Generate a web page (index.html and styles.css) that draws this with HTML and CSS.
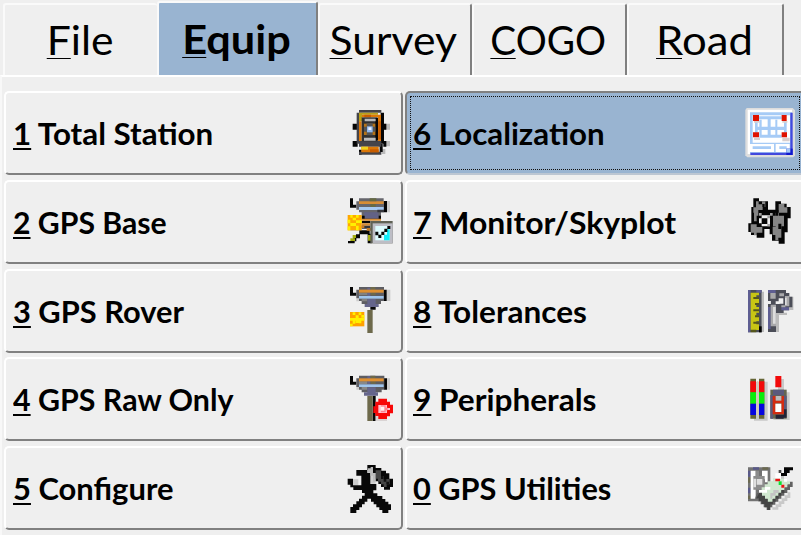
FILE: index.html
```
<!DOCTYPE html>
<html lang="en">
<head>
<meta charset="utf-8">
<title>Equip</title>
<link rel="stylesheet" href="styles.css">
</head>
<body>
<nav class="tabs">
<a class="tab file"><span><u>F</u>ile</span></a>
<a class="tab active"><span><u>E</u>quip</span></a>
<a class="tab survey"><span><u>S</u>urvey</span></a>
<a class="tab cogo"><span><u>C</u>OGO</span></a>
<a class="tab road"><span><u>R</u>oad</span></a>
</nav>
<main class="panel">
<button class="item"><span class="label l1"><u>1</u> Total Station</span>
<svg class="icon" viewBox="15 24 150 150"><path fill="#bbb" d="M132 71h18v18h-18zM132 123h18v16h-18zM126 147h10v15h-10z"/><path fill="#050505" d="M38 71h15v18H38zM38 123h15v17H38zM122 38h10v93h-10zM130 71h9v18h-9zM130 123h9v17h-9zM57 149h8v15h-8zM119 132h9v24h-9z"/><path fill="#44444a" d="M50 38h8v93h-8zM57 30h67v8H57zM57 123h67v17H57zM57 155h67v9H57z"/><path fill="#b8a018" d="M57 38h9v26h-9zM66 38h48v6H66z"/><path fill="#dc7808" d="M66 44h48v8H66zM57 64h8v59h-8zM114 44h9v79h-9zM64 140h52v17H64z"/><path fill="#c75c00" d="M73 44h20v8H73zM115 64h8v54h-8zM90 148h26v9H90z"/><path fill="#303030" d="M65 52h48v72H65z"/><path fill="#060606" d="M106 54h8v67h-8z"/><path fill="#bbb" d="M74 56h33v8H74zM72 113h35v9H72z"/><path fill="#b57316" d="M72 71h34v34H72z"/><path fill="#555" d="M80 70h18v36H80zM72 80h34v15H72z"/><path fill="#91b9ee" d="M81 79h17v18H81z"/><path fill="#f2f6ff" d="M85 82h9v8h-9z"/><path fill="#efd11c" d="M64 140h20v9H64z"/></svg></button>
<button class="item selected"><span class="label r1"><u>6</u> Localization</span>
<svg class="icon" viewBox="30 69 150 150"><path fill="#ddd" d="M35 69h138l7 7v136l-6 5H37l-6-6V75z"/><path fill="#fff" d="M38 74h133v133H38z"/><path fill="#a6cbf6" d="M45 82h126v123H45z"/><path fill="#fff" d="M53 91h112v82H53zM45 177h72v24H45zM122 177h42v24h-42z"/><path fill="#a6cbf6" d="M72 94h68v9H72zM60 108h8v35h-8zM68 125h86v10H68zM98 98h9v56h-9zM147 108h8v35h-8zM73 149h67v9H73zM73 104h7v47h-7zM121 104h6v47h-6zM53 184h55v8H53zM133 184h22v8h-22z"/><path fill="#d8cfcf" d="M57 108h17v5H57zM142 108h15v5h-15zM57 158h18v7H57zM142 158h22v11h-22z"/><path fill="#df1200" d="M54 90h18v18H54zM140 90h15v18h-15zM54 142h18v15H54zM140 142h16v15h-16z"/><path fill="#4248dd" d="M166 83h7v127h-7zM46 203h125v7H46z"/><path fill="#1018ce" d="M154 191h19v19h-19z"/><path fill="#a6cbf6" d="M154 191h12v12h-12z"/></svg></button>
<button class="item"><span class="label l2"><u>2</u> GPS Base</span>
<svg class="icon" viewBox="15 36 150 150"><path fill="#ccc" d="M141 48h9v34h-9zM31 115h34v23H31z"/><path fill="#060606" d="M30 40h9v19h10v9H30zM132 48h9v34h-9zM65 91h58v13H65zM65 107h26v8H65zM58 136h31v12H58zM48 148h12v12H48zM40 158h9v11h-9zM83 146h12v29H83zM24 168h20v7H24z"/><path fill="#66666c" d="M57 40h74v9H57zM49 49h83v25H49zM57 74h75v8H57zM65 82h58v9H65z"/><path fill="#626286" d="M72 82h43v9H72zM74 91h42v10H74z"/><path fill="#d68d36" d="M57 49h74v8H57zM65 101h58v6H65zM65 115h26v7H65z"/><path fill="#a5c9f2" d="M57 66h74v9H57z"/><path fill="#666a43" d="M89 40h20v9H89zM91 57h16v9H91z"/><path fill="#36363c" d="M65 122h26v9H65zM112 74h20v8h-20z"/><path fill="#ffa800" d="M23 90h42v46H23z"/><path fill="#fff000" d="M31 90h7v8h-7zM48 90h8v8h-8zM23 104h8v11h-8zM38 98h10v8H38zM48 106h17v8H48zM31 114h17v9H31zM48 122h8v14h-8zM23 124h8v12h-8z"/><path fill="#c47b24" d="M65 121h8v8h-8zM80 129h16v8H80z"/><path fill="#a5ad12" d="M38 150h10v9H38zM31 160h14v8H31zM84 150h9v17h-9z"/><path fill="#606256" d="M91 108h67v67H91z"/><path fill="#bdbdc5" d="M98 115h60v60H98z"/><path fill="#ddfcff" d="M106 123h43v43h-43z"/><path fill="#10edfa" d="M132 149h17v17h-17zM141 133h8v16h-8z"/><path fill="#060606" d="M106 140h9v9h9v-9h9v-9h9v-8h9v9h-9v9h-9v9h-9v9h-9v-8h-9z"/></svg></button>
<button class="item"><span class="label r2"><u>7</u> Monitor/Skyplot</span>
<svg class="icon" viewBox="30 36 150 150"><path fill="#050505" d="M55 40h17v9h27v25h22V49h17v7h17v10h12v34h-9v42h-9v34h-18v-9h-20v-19h-7v-16H88v26H65v-8H48v-9h-8v-26h9V66h6z"/><path fill="#858585" d="M63 49h8v17h18V57h-8v-8h10v17h-8v9H64v8h-9V67h8zM65 58h17v17H65zM57 75h13v34H57zM47 118h18v8h17v17H65v8H57v-8H47zM131 57h17v10h9v16h-25v9h15v32h-8v9h-17v-9h-8V92h8v-9h9zM113 125h26v33h-9v8h-9v-16h-8z"/><path fill="#ededed" d="M72 100h8v-9h25v33H80v-9h-8z"/><path fill="#a0a0a0" d="M72 84h8v8h-8zM105 84h8v8h-8zM97 91h8v9h-8zM97 117h8v7h-8z"/><path fill="#050505" d="M80 100h17v17H80zM65 92h7v25h-7zM122 75h8v17h-8zM130 116h9v16h-9z"/></svg></button>
<button class="item"><span class="label l3"><u>3</u> GPS Rover</span>
<svg class="icon" viewBox="15 33 150 150"><path fill="#ccc" d="M139 44h12v34h-12zM49 70h8v9h-8z"/><path fill="#070707" d="M30 36h9v17h10v9H30zM132 44h8v34h-8zM91 95h16v9H91z"/><path fill="#5d5d62" d="M49 44h8v-8h75v42h-9v9H65v-9h-8v-8h-8z"/><path fill="#818181" d="M57 53h26v8H57zM65 72h17v7H65z"/><path fill="#6d694b" d="M91 36h15v9H91zM91 53h16v8H91zM82 105h16v69H82z"/><path fill="#65658b" d="M74 87h42v9H74zM82 72h25v24H82zM82 38h9v25h-9z"/><path fill="#df9031" d="M57 44h74v9H57z"/><path fill="#9fc5ed" d="M57 63h74v8H57z"/><path fill="#ffa000" d="M30 111h43v43H30z"/><path fill="#fff000" d="M38 112h8v8h-8zM56 112h8v8h-8zM30 129h18v8H30zM56 129h17v8H56zM47 121h9v23h-9zM38 137h8v9h-8zM56 137h8v8h-8zM30 146h8v8h-8zM64 120h9v8h-9z"/></svg></button>
<button class="item"><span class="label r3"><u>8</u> Tolerances</span>
<svg class="icon" viewBox="30 33 150 150"><path fill="#bbb" d="M80 50h7v121h-7zM122 106h10v65h-10zM165 65h10v40h-10zM132 113h24v7h-24z"/><path fill="#4c4e58" d="M39 45h41v127H39zM99 45h54v9h10v11h9v32h-9v9h-17v8h-23v57H99V87h8v-9h-8z"/><path fill="#5e5e92" d="M39 45h8v127h-8zM64 45h16v8H64zM99 45h23v9H99zM99 96h8v66h-8zM139 97h23v9h-23z"/><path fill="#c8c514" d="M47 53h25v8h-8v9h8v17h-8v9h8v17h-8v9h8v17h-8v9h8v17H47z"/><path fill="#55571b" d="M55 66h17v6H55zM60 84h12v6H60zM55 103h17v6H55zM60 121h12v6H60zM55 140h17v6H55zM47 164h17v8H47z"/><path fill="#a9a9ab" d="M106 54h16v17h-16zM107 89h16v65h-16zM133 55h14v9h-14zM150 63h13v31h-13zM139 91h12v6h-12z"/><path fill="#efefef" d="M131 70h14v16h-14zM99 78h8v9h-8zM122 79h12v8h-12z"/><path fill="#ddd" d="M114 96h8v50h-8zM150 68h5v22h-5z"/><path fill="#030303" d="M72 154h8v18h-8z"/></svg></button>
<button class="item"><span class="label l4"><u>4</u> GPS Raw Only</span>
<svg class="icon" viewBox="15 27 150 150"><path fill="#ccc" d="M141 40h9v34h-9zM49 65h8v9h-8z"/><path fill="#070707" d="M30 33h9v17h10v9H30zM132 40h9v34h-9zM98 92h9v76h-9z"/><path fill="#5d5d62" d="M49 40h8v-8h76v42h-8v8H65v-8h-8v-8h-8z"/><path fill="#888" d="M57 49h25v8H57zM65 66h17v8H65z"/><path fill="#6d694b" d="M91 32h15v9H91zM91 49h16v8H91zM82 92h16v76H82z"/><path fill="#65658b" d="M72 82h42v10H72zM82 67h25v24H82zM82 34h9v24h-9z"/><path fill="#df9031" d="M57 40h74v9H57z"/><path fill="#9fc5ed" d="M57 58h74v8H57z"/><path fill="#d9d4d4" d="M107 152h34v16h-34z"/><path fill="#f70808" d="M115 101h26v9h9v9h9v26h-9v9h-9v8h-26v-9h-9v-9h-6v-20h6v-14h9z"/><path fill="#ffc2cc" d="M115 120h26v9h9v6h-9v9h-26z"/><path fill="#ff8490" d="M123 121h14v7h6v8h-6v6h-14z"/><path fill="#fff3f3" d="M122 125h11v12h-11z"/></svg></button>
<button class="item"><span class="label r4"><u>9</u> Peripherals</span>
<svg class="icon" viewBox="30 27 150 150"><path fill="#c9c9c9" d="M57 50h41v117H57zM129 42h18v33h-18zM147 82h17v83h-49v-10h32z"/><path fill="#656535" d="M46 41h17v120H46zM72 41h16v120H72z"/><path fill="#f20a0a" d="M46 49h17v33H46zM72 49h16v33H72zM121 33h18v34h-18z"/><path fill="#0aed0a" d="M46 82h17v34H46zM72 82h16v34H72z"/><path fill="#0505df" d="M46 116h17v34H46zM72 116h16v34H72z"/><path fill="#d9c8aa" d="M66 49h4v101h-4z"/><path fill="#64654f" d="M106 74h49v87h-49z"/><path fill="#5a597c" d="M106 90h8v71h-8zM114 74h33v17h-33zM147 92h8v42h-8z"/><path fill="#222236" d="M122 149h24v12h-24zM146 133h9v25h-9z"/><path fill="#d32b11" d="M113 93h9v55h-9zM139 93h8v55h-8zM122 106h17v9h-17zM122 141h17v7h-17z"/><path fill="#bcbcbc" d="M122 93h17v14h-17z"/><path fill="#fff" d="M121 116h18v25h-18z"/></svg></button>
<button class="item"><span class="label l5"><u>5</u> Configure</span>
<svg class="icon" viewBox="15 39 150 150"><path fill="#ccc" d="M39 88h16v18H39zM91 51h16v50H91z"/><path fill="#080808" d="M49 60h33v9h9v33h18v19h-9v9h12v8h15v9h9v8h9v8h8v17h-8v9h-18v-9h-9v-8h-9v-9h-8v-8h-8v-9H82v9h-8v8h-8v9h-8v8h-9v9H31v-18h8v-8h10v-9h8v-8h9v-9h8v-8h-8v-9H40v-8h-9v-8h-8V86h16v20h25V77H49zM82 45h25v9h17v8h14v8h10v16h11v25h-9v8h-18v-8h-9v-9h-8v-8h-8V69h-8v-9h-17z"/><path fill="#464646" d="M107 61h16v17h9v9h17v16h-9v8h-9v-8h-8v-8h-9v-9h-7z"/><path fill="#bbb" d="M83 55h9v-4h7v18h7v26h-7V77h-8v-9h-8z"/><path fill="#111" d="M123 78h8v9h8v8h8v8h-8v-8h-8v-8h-8z"/></svg></button>
<button class="item"><span class="label r5"><u>0</u> GPS Utilities</span>
<svg class="icon" viewBox="30 39 150 150"><path fill="#c9c9c9" d="M48 146h25v-9h8v9h8v9h9v9h8v8h16v-9h9v-9h9v-9h9v-9h9v-9h8v17h-9v9h-9v9h-9v9h-9v8h-18v-8h-9v-9h-9v-9h-9v-9H48z"/><path fill="#737373" d="M39 52h67v70H73v32H39z"/><path fill="#595989" d="M54 52h18v7H54zM39 62h8v18h-8zM39 113h8v17h-8z"/><path fill="#6b6950" d="M82 52h18v7H82zM39 82h8v16h-8zM39 137h8v10h-8z"/><path fill="#fff" d="M47 62h15v84H47zM81 62h17v35h-8v-9h-9z"/><path fill="#8c8c8c" d="M55 78h34v41H55zM62 62h10v17H62z"/><path fill="#e0e0e0" d="M55 86h8v26h-8zM65 87h17v17H65z"/><path fill="#626262" d="M66 129h65l34-34h8v16h-8v9h-8v9h-9v8h-9v9h-9v9h-9v9h-9v8h-9v8h-8v-8h-9v-9h-9v-9h-8v-8h-9z"/><path fill="#d1e8d0" d="M80 129v-17h9v-9h9v-9h16v-9h9v-9h16v9h9v9h17v9h-8v9h-9v9h-9v9h-9v9h-9v8h-9v9H98v-9H80z"/><path fill="#fff" d="M72 120h18v-9h16v8H96v9H72zM121 70h17v16h-17zM147 87h9v8h-9z"/><path fill="#c4c4c4" d="M106 129h9v-9h16v9h-9v8h-10v9h-6zM138 78h9v8h-9z"/><path fill="#444" d="M73 128h8v9h9v9h8v9h16v-9h8v-9h9v-9h8v-8h9v9h-9v8h-8v9h-9v9h-8v8h-8v17h-9v-8h-8v-10h-9v-8h-8v-9h-8zM131 60h8v9h9v9h-9v-9h-8z"/><path fill="#050505" d="M147 52h27v9h-10v8h-8v9h-9zM138 69h9v9h-9z"/><path fill="#e91515" d="M121 86h14v8h-14zM139 104h9v9h-9z"/><path fill="#0fe332" d="M131 94h9v11h-9z"/></svg></button>
</main>
</body>
</html>
```
FILE: styles.css
```
* { box-sizing: border-box; }
body { margin: 0; width: 801px; height: 535px; overflow: hidden; background: #efefef; color: #000; font-family: Lato, "Liberation Sans", sans-serif; }
.tabs { display: flex; align-items: flex-end; height: 75px; padding-left: 3px; }
.tab { height: 72px; border-top: 2px solid #fafafa; border-left: 2px solid #fafafa; border-right: 2px solid #808080; display: flex; align-items: center; justify-content: center; font-size: 41px; line-height: 48px; border-radius: 3px 3px 0 0; white-space: nowrap; }
.tab span { display: inline-block; }
.tab u, .label u { text-decoration-thickness: 1px; text-underline-offset: 3px; text-decoration-skip-ink: none; }
.label u { text-decoration-thickness: 2px; }
.file { width: 154px; border-right: 0; padding-right: 2px; }
.active { width: 161px; height: 74px; background: #99b4d1; font-weight: 700; padding-right: 3px; }
.survey { width: 154px; padding-right: 4px; }
.cogo { width: 155px; padding-right: 2px; }
.road { width: 157px; padding-right: 2px; }
.file span, .survey span { transform: scaleX(1.04); }
.active span { transform: scaleX(1.055); }
.cogo span { transform: scaleX(.945); }
.road span { transform: scaleX(1.065); }
.panel { height: 460px; border-top: 2px solid #fff; border-left: 2px solid #f8f8f8; padding: 14px 0 0 2px; display: grid; grid-template-columns: 399px 400px; grid-template-rows: 89px 89px 88px 89px 89px; column-gap: 2px; }
.item { height: 84px; margin: 0; border: 2px solid #808080; border-top-color: #fff; border-left-color: #fff; border-radius: 5px; background: #efefef; display: flex; align-items: center; justify-content: space-between; font: 700 30px/36px Lato, sans-serif; color: #000; text-align: left; }
.item:nth-child(odd) { padding: 0 6px 0 7px; }
.item:nth-child(even) { padding: 0 8px 0 6px; }
.selected { background: #99b4d1; border-color: #808080; border-bottom-color: #bcc6d2; outline: 1px dotted #111; outline-offset: -6px; }
.icon { width: 50px; height: 50px; flex: none; }
.label { white-space: nowrap; padding-bottom: 1px; transform-origin: 0 50%; }
.l1 { transform: scaleX(1.045); }
.l2 { transform: scaleX(1.006); }
.l3 { transform: scaleX(1.027); }
.l4 { transform: scaleX(1.012); }
.l5 { transform: scaleX(1.031); }
.r1 { transform: scaleX(1.043); }
.r2 { transform: scaleX(1.064); }
.r3 { transform: scaleX(1.051); }
.r4 { transform: scaleX(1.053); }
.r5 { transform: scaleX(1.024); }
```
